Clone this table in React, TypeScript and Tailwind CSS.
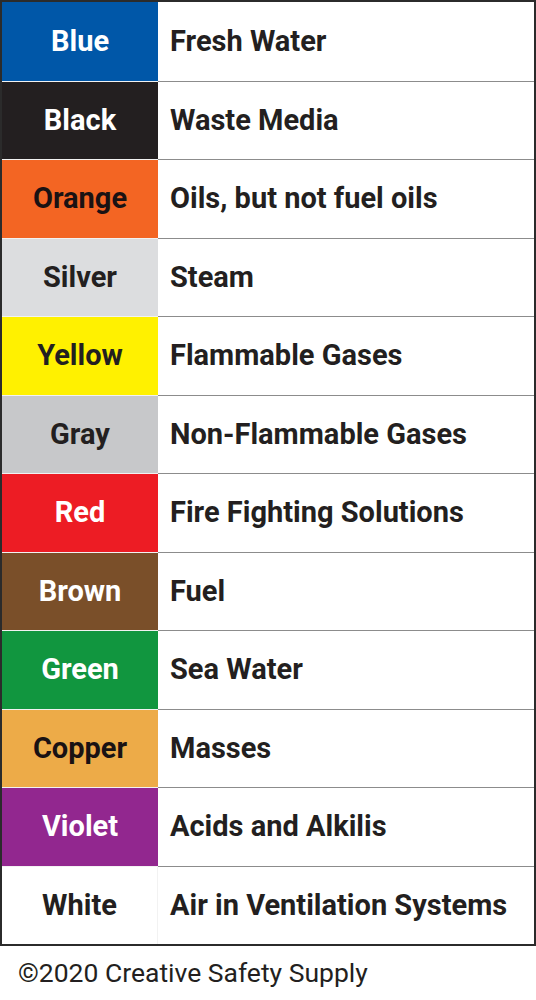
import React from 'react';

type Row = { name: string; use: string; bg: string; text: string };

const rows: Row[] = [
  { name: 'Blue', use: 'Fresh Water', bg: 'bg-[#0057a8]', text: 'text-white' },
  { name: 'Black', use: 'Waste Media', bg: 'bg-[#231f20]', text: 'text-white' },
  { name: 'Orange', use: 'Oils, but not fuel oils', bg: 'bg-[#f36523]', text: 'text-[#1a1213]' },
  { name: 'Silver', use: 'Steam', bg: 'bg-[#dcdddf]', text: 'text-[#231f20]' },
  { name: 'Yellow', use: 'Flammable Gases', bg: 'bg-[#fff100]', text: 'text-[#231f20]' },
  { name: 'Gray', use: 'Non-Flammable Gases', bg: 'bg-[#c7c8ca]', text: 'text-[#231f20]' },
  { name: 'Red', use: 'Fire Fighting Solutions', bg: 'bg-[#ed1c24]', text: 'text-white' },
  { name: 'Brown', use: 'Fuel', bg: 'bg-[#7a4f29]', text: 'text-white' },
  { name: 'Green', use: 'Sea Water', bg: 'bg-[#11963f]', text: 'text-white' },
  { name: 'Copper', use: 'Masses', bg: 'bg-[#edab48]', text: 'text-[#1a1213]' },
  { name: 'Violet', use: 'Acids and Alkilis', bg: 'bg-[#92278f]', text: 'text-white' },
  { name: 'White', use: 'Air in Ventilation Systems', bg: 'bg-white', text: 'text-[#231f20]' },
];

export default function App() {
  return (
    <div className="w-[536px] h-[1000px] bg-white font-['Roboto',sans-serif]">
      {/* Table */}
      <div className="border-2 border-[#2b2b2b] flex flex-col">
        {rows.map((r, i) => (
          <div key={r.name} className="flex h-[78.5px]">
            <div
              className={`w-[156px] flex items-center justify-center ${r.bg} ${
                i > 0 ? 'border-t border-[#f2f2f2]' : ''
              } ${r.name === 'White' ? 'border-r border-[#dedede]' : ''}`}
            >
              <span className={`text-[29px] font-bold ${r.text}`}>{r.name}</span>
            </div>
            <div
              className={`flex-1 flex items-center pl-3 ${i > 0 ? 'border-t border-[#8c8c8c]' : ''}`}
            >
              <span className="text-[29px] font-bold text-[#231f20]">{r.use}</span>
            </div>
          </div>
        ))}
      </div>

      {/* Footer */}
      <p className="pl-[18px] pt-[9px] text-[26.5px] leading-[36px] text-[#231f20]">©2020 Creative Safety Supply</p>
    </div>
  );
}
